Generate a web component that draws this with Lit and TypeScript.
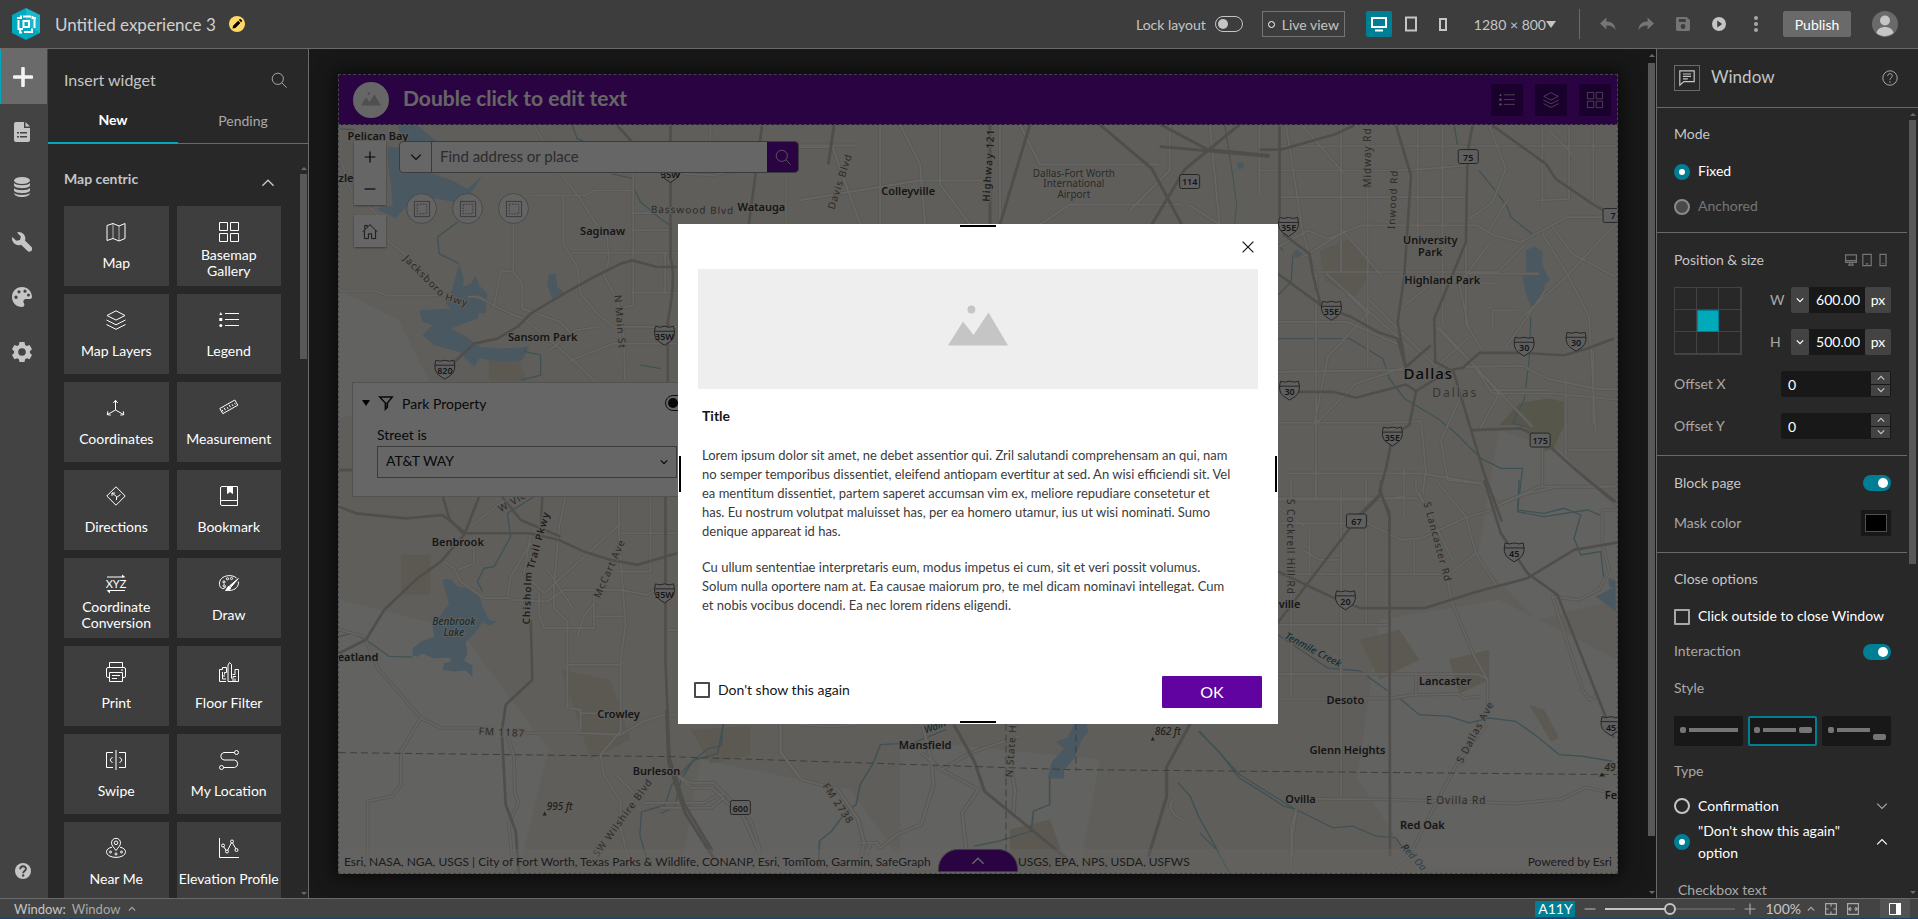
import { LitElement, html, svg, css } from "lit";
import { customElement } from "lit/decorators.js";

/* ---------- icons ---------- */

const glyphs: Record<string, unknown> = {
  map: svg`<path d="M1 3.500 7 1.500l6 2.500 6-2.500v15l-6 2.500-6-2.500-6 2z"/><path d="M7 1.500v15M13 4v15" opacity=".6"/>`,
  grid: svg`<path d="M.5.5h8v8h-8zM11.500.5h8v8h-8zM.5 11.500h8v8h-8zM11.500 11.500h8v8h-8z"/>`,
  layers: svg`<path d="M10 .8 19 5.500l-9 4.600L1 5.500zM.5 10l9.500 4.800L19.500 10M.5 14.500 10 19.300l9.500-4.800"/>`,
  legend: svg`<path d="M6 3.500h14M6 9.500h14M6 15.500h14"/><path fill="currentColor" stroke="none" d="M.3 5 1.800 2l1.500 3zM.3 8h3v3h-3z"/><circle cx="1.800" cy="15.500" r="1.500" fill="currentColor" stroke="none"/>`,
  coords: svg`<path d="M9.500 12V2.500M7.300 5l2.200-2.700L11.700 5M9.500 12l-8 4.500M9.500 12l8 4.500M1.800 13.300l-.5 3.400 3.500.4M17.300 13.300l.5 3.400-3.500.4"/>`,
  ruler: svg`<path d="m.8 11.500 15-8.500 3 5.200-15 8.500zM4 14.500l-.9-1.700M6.500 13.200 5 10.800M9 11.800l-.9-1.700M11.500 10.200 10 7.800M14 9l-.9-1.700M16.300 7.500l-.7-1.300" transform="translate(0 -1)"/>`,
  directions: svg`<path d="M10 .8 19.200 10 10 19.200.8 10z"/><path d="M10.500 14v-3.500L6 7M6 10V7h3.200M10.500 11.500l4-3"/>`,
  bookmark: svg`<path d="M3 .5h15.500v19H3A1.500 1.500 0 0 1 1.500 18V2A1.500 1.500 0 0 1 3 .5zM1.500 15.500A1.500 1.500 0 0 1 3 14.500h15.500"/><path fill="currentColor" d="M8.500.5h5v7L11 5.500l-2.500 2z"/>`,
  xyz: svg`<path d="M1 3h17M2 16.500h17"/><path fill="currentColor" stroke="none" d="M16 .5 19.500 3.300H16zM4 19.500.5 16.200H4z"/><text x="10" y="14" text-anchor="middle" font-size="11" font-family="Lato, sans-serif" fill="currentColor" stroke="none">XYZ</text>`,
  draw: svg`<path d="M17.500 4C13.500.5 6 1 2.500 4.500c-3.300 3.500-2.500 9 1 10 2.500.6 2.300-1.500 3.700-2M19.300 7.500c1 4.500-3 9-9.300 9"/><circle cx="5" cy="8" r="1.100"/><circle cx="8.500" cy="4.800" r="1.100"/><circle cx="12.500" cy="4.500" r="1.100"/><circle cx="5.200" cy="11.800" r="1.100"/><path fill="currentColor" d="M19.300 4.500 11 11.500l1.200 1.400zM10.300 12c-2 .5-2 2.800-3.800 4.500 3 .5 5-.8 5.200-2.800z"/>`,
  print: svg`<path d="M3.500 5.500v-5h13v5M3.500 15.500H2A1.500 1.500 0 0 1 .5 14V7A1.500 1.500 0 0 1 2 5.500h16A1.500 1.500 0 0 1 19.500 7v7a1.500 1.500 0 0 1-1.500 1.500h-1.500M3.500 10.500h13v9h-13zM6 13.500h8M6 16.500h5M15 8h2"/>`,
  floor: svg`<path d="M.5 19.500v-12h3v-2h4v5h-2v2M9 19.500V3l1.500-2.500 2 2v14M.5 19.500H7M9 19.500h10.500v-12H16v5h-2.500M14 19.500v-5h3M3.500 10v7H7M3 14h3M16 16.500v3"/>`,
  swipe: svg`<path d="M10 0v20M7 2.500H.5v15H7M13 2.500h6.500v15H13M6.500 7 4 10l2.500 3M13.500 7l2.500 3-2.500 3"/>`,
  location: svg`<circle cx="17.500" cy="2.500" r="2"/><circle cx="2.500" cy="17.500" r="2"/><path d="M15.500 2.500H5a3.800 3.800 0 0 0 0 7.500h10.500a3.800 3.800 0 0 1 0 7.500h-11"/>`,
  nearme: svg`<path d="M10 12.500C7.500 9 5.500 7.500 5.500 4.800a4.500 4.500 0 0 1 9 0C14.500 7.500 12.500 9 10 12.500z"/><circle cx="10" cy="4.800" r="1.800"/><path d="M6 9.200C-1 10.500-1 16 4 18.200c3.500 1.600 8.500 1.600 12 0 5-2.200 5-7.700-2-9"/><circle cx="4.500" cy="14" r="1"/><circle cx="10" cy="16" r="1"/><circle cx="15.500" cy="14" r="1"/>`,
  elevation: svg`<path d="M.5 0v19.500H20M4.500 8.500 7.500 13M8.500 12.500l4-8M13.500 5l3.500 6"/><circle cx="4" cy="7.500" r="1.500"/><circle cx="8" cy="13.500" r="1.500"/><circle cx="13" cy="3.500" r="1.500"/><circle cx="17.500" cy="12" r="1.500"/>`,
  search: svg`<circle cx="8.500" cy="8.500" r="7"/><path d="m13.500 13.500 6 6"/>`,
  up: svg`<path d="m2 14 8-8 8 8"/>`,
  down: svg`<path d="m2 6 8 8 8-8"/>`,
  plus: svg`<path d="M10 1v18M1 10h18"/>`,
  minus: svg`<path d="M1 10h18"/>`,
  close: svg`<path d="m1 1 18 18M19 1 1 19"/>`,
  home: svg`<path d="M1 11 10 2l9 9M3 9.500v10h5v-6h4v6h5v-10M3.500 8V3h3v2"/>`,
  filter: svg`<path d="M1 1.500h18l-7 8.500v6l-3 3V10z"/><path fill="currentColor" stroke="none" opacity=".5" d="M10 9h2v7l-2 2z"/>`,
  dashed: svg`<path d="M.5.5h19v19H.5z"/><path stroke-dasharray="2 1.500" d="M4 4h12v12H4z"/>`,
  question: svg`<circle cx="10" cy="10" r="9"/><path d="M7 7.500c.2-4 6-3.600 6-.3 0 2.300-3 2.300-3 5M10 14v1.800"/>`,
  chat: svg`<path stroke-width="1.500" d="M1 1h18v13.500H6L1 19zM5 5h10M5 8h10M5 11h6"/>`,
  desktop: svg`<path d="M1 1.500h18v12.500H1zM1 11h18M5 18.500h10M8 14v4M12 14v4"/>`,
  tablet: svg`<path d="M3 .5h14v19H3zM8 16.500h4"/>`,
  phone: svg`<path d="M5 .5h10v19H5zM9 16h2"/>`,
  fit: svg`<path d="M1 1h18v18H1zM10 1v5M10 14v5M1 10h5M14 10h5"/>`,
  fitwide: svg`<path d="M1 1h18v18H1zM3 10h5M12 10h5M6 7l-3 3 3 3M14 7l3 3-3 3"/>`,
};

const icon = (name: string, size = "s20") =>
  html`<svg class="icon ${size}" viewBox="0 0 20 20" aria-hidden="true">${glyphs[name]}</svg>`;

const solids: Record<string, unknown> = {
  add: svg`<path d="M8.200 1.500a1.500 1.500 0 0 1 3.600 0v6.700h6.700a1.500 1.500 0 0 1 0 3.600h-6.700v6.700a1.500 1.500 0 0 1-3.600 0v-6.700H1.500a1.500 1.500 0 0 1 0-3.600h6.700z"/>`,
  page: svg`<path fill-rule="evenodd" d="M4 0h8v6h6v12a2 2 0 0 1-2 2H4a2 2 0 0 1-2-2V2a2 2 0 0 1 2-2zm1 10v1.500h2V10zm3 0v1.500h7V10zm-3 4v1.500h2V14zm3 0v1.500h7V14z"/><path d="m13.500 0 4.500 4.500h-4.500z"/>`,
  data: svg`<ellipse cx="10" cy="3.500" rx="8" ry="3.500"/><path d="M2 6c2 3 14 3 16 0v2.500c-1 3.500-15 3.500-16 0zM2 11c2 3 14 3 16 0v2.500c-1 3.500-15 3.500-16 0zM2 16c2 2.500 14 2.500 16 0-.5 5.300-15.500 5.300-16 0z"/>`,
  wrench: svg`<path d="M7 0a6.500 6.500 0 0 1 6 8.500l6.300 6.300a2.800 2.800 0 0 1-4 4L9 12.800A6.500 6.500 0 0 1 .3 5l4 3.800 3.700-.8.800-3.500L5 .4z"/>`,
  palette: svg`<path fill-rule="evenodd" d="M10 0C4 0 0 4.500 0 10c0 6 4.500 10 10 10 2 0 3-2 2-3.500-1.500-2.500 0-4.500 2.500-4.500H18c1.500 0 2-1 2-2.500C19.500 4 15.500 0 10 0zM7 3.200a1.600 1.600 0 1 1 0 3.200 1.600 1.600 0 0 1 0-3.200zM13 2.600a1.600 1.600 0 1 1 0 3.200 1.600 1.600 0 0 1 0-3.200zM16.500 6.400a1.500 1.500 0 1 1 0 3 1.500 1.500 0 0 1 0-3zM4 8.600a1.700 1.700 0 1 1 0 3.400 1.700 1.700 0 0 1 0-3.400z"/>`,
  gear: svg`<path fill-rule="evenodd" d="M7.500 0h5l.6 2.900 1.700 1 2.800-.9 2.400 4.200-2.100 2v1.800l2.100 2-2.400 4.200-2.800-.9-1.700 1-.6 2.700h-5l-.6-2.700-1.700-1-2.800.9L0 13l2.100-2V9.200L0 7.200 2.400 3l2.800.9 1.700-1zM10 6.200a3.800 3.800 0 1 0 0 7.600 3.800 3.800 0 0 0 0-7.600z"/>`,
  help: svg`<circle cx="10" cy="10" r="10"/><path d="M6.500 7.800c.2-5 7.300-4.600 7.200-.5 0 2.800-3.500 2.700-3.500 5.500" fill="none" stroke="#434343" stroke-width="2.400"/><circle cx="10.200" cy="15.700" r="1.500" fill="#434343"/>`,
  undo: svg`<path d="M8 2v5c7 0 11 4 11.500 11C17 13.500 13.500 12 8 12v5L0 9.500z"/>`,
  redo: svg`<path d="M12 2v5C5 7 1 11 .5 18 3 13.500 6.500 12 12 12v5l8-7.500z"/>`,
  save: svg`<path fill-rule="evenodd" d="M2 0h13l5 4.500V18a2 2 0 0 1-2 2H2a2 2 0 0 1-2-2V2a2 2 0 0 1 2-2zm2 3v4h10V3zm6 7a3.500 3.500 0 1 0 0 7 3.500 3.500 0 0 0 0-7z"/>`,
  play: svg`<path fill-rule="evenodd" d="M10 0a10 10 0 1 1 0 20 10 10 0 0 1 0-20zM7.500 5v10l7-5z"/>`,
  picture: svg`<circle cx="7.800" cy="3.500" r="1.300"/><path d="m0 15.500 5-8 3.500 4.500 5-7.500L20 15.500z"/>`,
};

const solid = (name: string, size = "s20") =>
  html`<svg class="solid ${size}" viewBox="0 0 20 20" aria-hidden="true">${solids[name]}</svg>`;

/* ---------- shared styles ---------- */

const shared = css`
  * { box-sizing: border-box; }
  button, input, select { font: inherit; color: inherit; margin: 0; }
  button { background: none; border: 0; padding: 0; display: inline-flex; align-items: center; justify-content: center; }
  h1, h2, h3, p { margin: 0; font: inherit; }
  .icon { fill: none; stroke: currentColor; stroke-width: 1; overflow: visible; flex: none; }
  .solid { fill: currentColor; flex: none; }
  .s8 { width: 8px; height: 8px; stroke-width: 3; }
  .s12 { width: 12px; height: 12px; stroke-width: 2; }
  .s14 { width: 14px; height: 14px; stroke-width: 2; }
  .s16 { width: 16px; height: 16px; stroke-width: 1; }
  .s20 { width: 20px; height: 20px; }
  .s60 { width: 60px; height: 60px; }
  .gutter { display: flex; flex-direction: column; align-items: center; flex: none; }
  .arrow { border: 3px solid transparent; width: 0; height: 0; }
  .arrow.n { border-bottom-color: #6a6a6a; border-top: 0; }
  .arrow.s { border-top-color: #6a6a6a; border-bottom: 0; margin-top: auto; }
  .thumb { width: 7px; background: #585858; margin-top: 4px; }
  .switch { appearance: none; width: 28px; height: 16px; border-radius: 8px; background: #007f94; padding: 3px; display: flex; justify-content: flex-end; flex: none; }
  .switch::before { content: ""; width: 10px; height: 10px; border-radius: 50%; background: #fff; }
  .switch.off { background: none; border: 1px solid #c5c5c5; padding: 2px; justify-content: flex-start; }
  .switch.off::before { background: #c5c5c5; }
  .check { appearance: none; width: 16px; height: 16px; border: 2px solid #a8a8a8; border-radius: 1px; flex: none; }
  .radio { appearance: none; width: 16px; height: 16px; border: 2px solid #c5c5c5; border-radius: 50%; flex: none; }
  .radio:checked { border: 5px solid #007f94; background: #fff; }
  .radio:disabled { border-color: #8a8a8a; background: #4a4a4a; }
`;

/* ---------- basemap ---------- */

type Label = [text: string, x: number, y: number, kind?: string, angle?: number];

const labels: Label[] = [
  ["Pelican Bay", 377, 139], ["Saginaw", 602, 235], ["Watauga", 761, 211], ["Colleyville", 908, 195],
  ["Sansom Park", 542, 341], ["Benbrook", 457, 546], ["Crowley", 618, 718], ["Burleson", 656, 775],
  ["Mansfield", 925, 749], ["University", 1431, 244], ["Park", 1431, 256], ["Highland Park", 1443, 284],
  ["Lancaster", 1446, 685], ["Desoto", 1346, 704], ["Glenn Heights", 1348, 754], ["Ovilla", 1301, 803],
  ["Red Oak", 1423, 830], ["ville", 1290, 608], ["zle", 345, 182], ["eatland", 357, 661], ["Fe", 1612, 799],
  ["Dallas", 1429, 379, "city"], ["Dallas", 1456, 397, "county"],
  ["Dallas-Fort Worth", 1074, 176, "poi"], ["International", 1074, 187, "poi"], ["Airport", 1074, 198, "poi"],
  ["Benbrook", 453, 625, "water"], ["Lake", 453, 636, "water"], ["Tenmile Creek", 1312, 653, "water", 28],
  ["Waln", 936, 730, "water", -20], ["Red Oa", 1412, 860, "water", 48],
  ["995 ft", 559, 810, "peak"], ["862 ft", 1168, 735, "peak"], ["49", 1611, 771, "peak"],
  ["Basswood Blvd", 692, 213, "road", 1], ["Davis Blvd", 843, 182, "road", -72], ["Highway 121", 992, 165, "roadb", -86],
  ["Jacksboro", 421, 278, "road", 45], ["Hwy", 455, 303, "road", 16], ["N Main St", 616, 322, "road", 85],
  ["Chisholm", 530, 598, "roadb", -88], ["Trail Pkwy", 541, 541, "roadb", -74], ["W Vic", 513, 505, "road", -30],
  ["McCart Ave", 612, 570, "road", -66], ["FM 1187", 501, 736, "road", 3], ["SW Wilshire Blvd", 625, 820, "road", -54],
  ["FM 2738", 835, 806, "road", 56], ["N State Hwy", 1015, 744, "road", -86], ["Midway Rd", 1372, 157, "road", -90],
  ["Inwood Rd", 1397, 199, "road", -87], ["S Cockrell Hill Rd", 1287, 547, "road", 90],
  ["S Lancaster Rd", 1435, 543, "road", 75], ["E Ovilla Rd", 1457, 804, "road"], ["S Dallas Ave", 1479, 734, "road", -62],
];

type Shield = [text: string, x: number, y: number];
const interstates: Shield[] = [
  ["35W", 670, 172], ["35W", 664, 335], ["35W", 664, 593], ["820", 444, 369], ["35E", 1289, 226], ["35E", 1332, 310],
  ["35E", 1393, 436], ["30", 1290, 390], ["30", 1525, 346], ["30", 1577, 341], ["20", 1346, 600], ["45", 1515, 552], ["45", 1612, 726],
];
const routes: Shield[] = [["75", 1469, 156], ["67", 1357, 521], ["175", 1541, 440], ["114", 1190, 181], ["600", 740, 808], ["7", 1614, 215]];

const highways = svg`
  <g transform="translate(330 60) scale(.333333)">
    <path d="M345 930l85-80 70-15 60-35 40-40 100-60 90-50 80-40 35-10 75 20h60M1020 195v400q18 50-8 190v500M860 195l50 55M1295 195l-40 300"/>
  </g>
  <g transform="translate(330 360) scale(.333333)">
    <path d="M25 880l80-40 55-90 100-95 70-50 70-80 45-115M25 440l50 20 150 15 110-10 70 55h190l90 20 75 35 80 25 80 15 120-35M335 405l20 70 45 50M635 405l-5 115M510 405l60 75 120 50M1005 405v500l12 290 45 140 85 140M600 780l5 180-80 75-12 80 12 220 30 80 10 140"/>
  </g>
  <g transform="translate(1260 100) scale(.333333)">
    <path d="M60 75v275M0 147h65l160-45 60-28M410 75l45 150-20 300-20 140 25 140M640 75l-15 80-5 270-95 230 3 130 55 30 90 300 55 150M700 75l160 115 30 45 110 75 60 35M70 400l80 60 10 60 25 100M55 520l130 95 90 35 80 45 60 20 25 90M440 800l75-65M60 875h160l70 18 150-40 30 20 40-25 70-40 30-5 50-45h130l125 7 70-20 80-30M470 875l-20 100-50 30-20 100-20 70 30 60v60M635 990l150-5 60 30 100 90 120 100M360 1185l-60 60"/>
  </g>
  <g transform="translate(1200 480) scale(.333333)">
    <path d="M545 0v40l25 70 2 1020M235 275l180 85 70 25h190l160-50 150-40 140-85 130-22M855 0l50 160 80 120 90 65 170 430M1165 0l85 65M540 50l-70 70-240 315"/>
  </g>
  <g transform="translate(660 710) scale(.408163 .333333)">
    <path d="M15 0l5 160 40 150 70 135M720 45l50 110 25 90 200 200M1300 42l-58 130v90l-45 180"/>
  </g>
  <path d="M834 124l-6 40M990 124v100M1161 124l47 25 62 6M1240 124l-55 45-33 55M1100 124l52 44 30 56M1030 124l-30 100"/>
  <path d="M338 470h16M1160 146l110 10"/>`;

const streets = svg`
  <g transform="translate(330 60) scale(.333333)">
    <path d="M690 340l55 70 45 70 40 50 5 70-15 45 40 75 20 110 3 130M600 405h165l25-15h118M698 405v145l42 70 10 80 50 60 50 40h190M722 577h320M908 340v395l-40 10M910 458h60M910 510l120-2M1004 577v120M910 697h130M25 692h110l35 14h130l60-5M170 540l50 40 110 100M410 710c50-10 60 30 170 65l130 110 80 75M548 490v145l27 35v75l115 40 40 45M490 740l20-110 38 5M720 900l130-50h190M30 300l30 90 110 100M1365 260h140M1140 195v50M610 195l30 50M655 870l80-60 70-10M1060 340l100 5M1368 340v160M1160 340l60-10"/>
  </g>
  <g transform="translate(330 360) scale(.333333)">
    <path d="M25 810l75 20 40 95 130 150 60 30h120M270 1075l-60 100v100l-25 35-75 15v180M570 1120h170l130 5 70-40 60-20h35M710 1045v-260l-40-40v-60l15-180 20-100M710 1045l40 5v60M710 915h160M865 405v120l20 270-15 110v210l-60 70 10 60 50 80v80l30 120 60 60M530 1130l20 60 2 110 12 30-30 60 10 100M340 605l30 20 20 40 70 50h80M430 520v90l-50 20M540 720l110 5 50-35h170l80 15 60-40M530 710l10-60 60-100M625 700v60l15 45h150v-100M600 520l-20 120 60 60 100-90 130-120M960 405v230h-100M650 630l20 30 60 90M790 770h95M940 1330l-90-90M1030 1240l50 30h70l30 30-60 30H940M1180 1300l80 80 30 90M870 520h170M1010 810h40M750 1060l130 2M740 830l20-60 30-40M420 500l100-80M1350 1075v100l60 80"/>
  </g>
  <g transform="translate(1260 100) scale(.333333)">
    <path d="M0 210h410l90-5 120-10M65 137h1005M65 290h555M850 75v240M475 75v330M550 75v600M245 75v440M325 100v700M930 75v220l-100 5M1003 75v230M80 75l50 320 45 170M55 440l90-50 60 25 100-40h350l50 30 80 20 140-75h190M130 470l130-80M165 515h550l80-80M170 520v680M55 665h210l180 80M55 815l380-5M55 968h330l100-5 15 150-10 70M75 1120h410l180 30M55 1195h420M620 430v240l50 80M690 75l50 130-40 100-70 50M750 290l-60 100M850 400l80 130 60 120 10 170 10 180M620 800l170-3 80 40 150 30h50M630 690l-30-140 90-120M520 670l120 120 60 90h180l190 18M640 790l180 190M700 870h170M790 650l130-120 150-160M330 600l200 200 100-90M200 520l260 230M265 580l60 60-120 130-40 200M440 800l-150 50-120 120M480 1180l100 200M710 1220l130-60h230M850 1000v160M920 840v230M1003 750v220M930 1050h140M540 680l180 200-60 110M430 620l100-80 170 10M700 690v-60l80 0M880 380l60 80 130 70M600 900l-55 120 20 120 90 10M620 520h220M740 740l120-170M130 75l120 140M870 90l70 70M250 390l120 140M435 1100v150"/>
  </g>
  <g transform="translate(1200 480) scale(.333333)">
    <path d="M425 30v920M275 0v650M348 0v60M235 60h290l90-10M235 130h270l100 50 60-5 130-60 100-30M235 283h500M235 435h330M235 583h600l30 15v80M235 658h170l90-2h80l60-10 140-3 20 12 50-5M345 958l220 2 250 7 130 5 140-13 75-35 90 20M865 730l-90 120-80 150-60 120-60 50M745 300l10 60 70 170 35 60M710 0l90 110 30 110-90 70M830 220l60 95M650 0v30l30 50M900 75l-60-70M905 70l80-30 90-20h150M1060 350l80 10 60-30 30-60-20-80v-100h40M1060 350l90 280 20 30 20-10M235 80l80 60M290 990l-15 50v130M645 180v100M650 585v60M330 150v135M500 0v430M310 210l50 30h60"/>
  </g>
  <g transform="translate(660 710) scale(.408163 .333333)">
    <path d="M295 40v90l50 80 90 30 50 90 15 70-10 50M485 400h45l10 15 40-40 60-30 30-120-5-70-20-100-30-60M515 400l-10 40M690 180l90 60-40 70 10 110M690 180l70-50 120-50M45 200l30 35h50l30 30-30 30H0M150 265l50 50 30 80 15 40M860 180l10 60-5 80M640 130l50 50M340 45l80 5 60-5M1560 300l-10 80v60M1260 270c-20 20 0 50 20 60"/>
  </g>
  <path d="M798 145h60M830 140l30 84M880 124v100M900 124l20 40 5 60M940 124v60l30 40M798 200l120-20h70M1000 124v100M1020 124l20 40 120 0M1040 224l30-20h110M1130 210l40-40v-46M1190 205l30 19M1210 124l10 100M1260 124v70"/>`;

const creeks = svg`
  <g transform="translate(330 60) scale(.333333)">
    <path d="M380 485l-60 45 5 50 60 30M910 385l20 40 60 50 30 20M725 195l15 40 25 10M570 960l60-15v-60l-50-12M930 915l60 10M25 205l45 2M845 340l65 15"/>
  </g>
  <g transform="translate(330 360) scale(.333333)">
    <path d="M25 830l40-10 40 20 70 50 70 2M440 665l20-40 30-5 50-90-10-70 80-50M440 665l15 30M1178 1077l-5 80-40 10-60 50-50 60-20 60-70 20-5 70 20 70"/>
  </g>
  <g transform="translate(1260 100) scale(.333333)">
    <path d="M585 75l10 60M660 210l40 50 45 60 10 30 75 60M55 715h215l100 60 20 60 45 60 100 60 50 40 80 80 60 30h65l-15 130 80 15 130-20 50 20M815 650l-5 130-15 120-35 70 40 10M55 585l40-40 5-80M0 370l70 80"/>
  </g>
  <g transform="translate(1200 480) scale(.333333)">
    <path d="M235 465l150 100 95 8 85 60M600 655l60 50 90 5 60 20 60-15 80 10 70 50 60 50 70 5 90 15M0 755l120 130 160 100 120 60 60-5 70 30 60 5 40 60M0 1060l50 50 40 70M960 0l-5 90 80 10 60-15 50 20-20 70 20 50 60-10 10 90-15 30"/>
  </g>
  <g transform="translate(660 710) scale(.408163 .333333)">
    <path d="M155 42l-15 90-60 20-30 60-15 80-35 20M700 60l-80 40-80 5-20 60-30 60-10 60-30 30-30 50-30 30-2 80M955 205v80l-40 20-5 60-80 30-60 15M1320 65l50 60 50 80 60 45 50 40 30 10M1270 220l30 40 20 60 50 110"/>
  </g>
  <path d="M1225 124l8 50 4 30-2 20"/>`;

const water = svg`
  <g transform="translate(330 60) scale(.333333)">
    <path d="M200 195h60l55 45v20l-10 80 60 20 45 25 45-40-35 55-20 5-5 25-100-20-30-10-50 50-20 25-60-30 50-10-5-60-10-70v-45h50z"/>
    <path d="M385 610l15 50-5 20 25-10 15-25 10 30 25 25-5 60-70-5-35-10-15-15 20-45zM655 640h20l5 40 20 15-35 20-15-40zM265 750l80-5 50 5 40-30 20-5-15 60-80 30 40 20 50 35 60 5 85-5-20 40-60 5-70-10-15 25-20-20-25-25-75-20-35-30 30-30-30-10z"/>
  </g>
  <g transform="translate(330 360) scale(.333333)">
    <path d="M335 658h25l20 22 60 10 15 50 20 40 25 5-25 12-20-10-20 30-30 30 5 35-10 20 25 15v35l-20-20-35 3-35-5 5-20 20-5 0-12-50 3-35-15-15 10-15-5v-20l25-20 40-15-5-30 50-70-10-30z"/>
  </g>
  <g transform="translate(1260 100) scale(.333333)">
    <path d="M800 450l25-12 25 15v40l15 35 8 10-15 12-5 30-20 30-15 15-18-45-10-50 12-10zM100 455l15-8 14 15-14 10-13-2z"/>
  </g>
  <g transform="translate(1200 480) scale(.333333)">
    <path d="M1228 293l22 10v22l-20-5zM1190 350l60-30v75z"/>
  </g>
  <g transform="translate(660 710) scale(.408163 .333333)">
    <path d="M1015 42h30l5 25-15 20-20 60-25 35v25h-40l10-50 30-40-20-20 30-15z"/>
  </g>
  <path d="M1238 162h6v6h-6z"/>`;

@customElement("city-basemap")
export class CityBasemap extends LitElement {
  static styles = css`
    :host { display: block; overflow: hidden; background: #f0ece0; }
    svg { display: block; width: 100%; height: 100%; }
    .park { fill: #e3dece; }
    .pale { fill: #f5f4ef; }
    .forest { fill: #d8dab8; }
    .water { fill: #b8dcf2; }
    .creeks { fill: none; stroke: #9ecbd4; }
    .creeks g { stroke-width: 4; }
    .edge, .fillroad, .hw { fill: none; stroke-linejoin: round; }
    .edge { stroke: #e0dbd1; stroke-width: 4; }
    .edge g { stroke-width: 11; }
    .fillroad { stroke: #fdfcf8; stroke-width: 2; }
    .fillroad g { stroke-width: 5; }
    .hw { stroke: #c6c2bb; stroke-width: 3; }
    .hw g { stroke-width: 8; }
    .county-line { fill: none; stroke: #9a9a90; stroke-dasharray: 7 4; }
    text { font: 600 11px "Noto Sans", sans-serif; fill: #38383c; text-anchor: middle; paint-order: stroke; stroke: #f0ece0; stroke-width: 2px; }
    .city { font-size: 15px; font-weight: 500; fill: #202022; letter-spacing: 1px; }
    .county { font-size: 12px; font-weight: 400; fill: #8b887c; letter-spacing: 2px; }
    .poi, .road, .roadb { font-size: 10px; font-weight: 400; fill: #6b6b6b; letter-spacing: 1px; }
    .poi { letter-spacing: 0; }
    .roadb { font-weight: 600; fill: #505050; }
    .water-label, .peak { font-size: 10px; font-weight: 500; font-style: italic; fill: #33718d; }
    .peak { fill: #58533e; }
    .shield { fill: #eee; stroke: #5c5c5c; stroke-width: 1; }
    .num { font-size: 9px; stroke: none; }
  `;

  render() {
    return html`<svg viewBox="338 124 1280 750" preserveAspectRatio="xMidYMid slice" role="img" aria-label="Map of Dallas and Fort Worth">
      <path class="pale" d="M338 290l60 30 30 60-90 40zM338 600l120 30 90 120-30 120H338zM1380 620l120-20 118 60v210h-200l-60-90zM1500 430l60 20 58 60v90l-80 20-60-60zM700 760l150 30 60 84H680zM900 740l200 20-20 110H900z"/>
      <path class="park" d="M488 355l28-4 10 30h-38zM1320 250l30-12 25 30-20 30-30-18zM400 555h30v40h-30zM560 670l50 10 20 60-40 20zM690 730l60-4v30l-40 8zM1010 830l40-10 20 54h-60zM1530 705l15 5 15 28-8 4zM1450 660l40-10v30l-30 14zM1360 640l40-10 20 30-40 20z"/>
      <path class="forest" d="M1500 425l20-22 30-5 16 4v22l-12 25-10 2-20-26z"/>
      <g class="water">${water}</g>
      <g class="creeks">${creeks}</g>
      <g class="edge">${streets}</g>
      <g class="fillroad">${streets}</g>
      <g class="hw">${highways}</g>
      <path class="county-line" d="M338 753l330 4 400 13 550 5M1006 724v150M1076 724v46"/>
      ${interstates.map(([t, x, y]) => svg`<g transform="translate(${x} ${y})"><path class="shield" d="M-9-9q4 2 9 0 5 2 9 0 3 10-3 15-3 2-6 4-3-2-6-4-6-5-3-15z"/><path class="shield" d="M-10-4h20"/><text class="num" y="5">${t}</text></g>`)}
      ${routes.map(([t, x, y]) => svg`<g transform="translate(${x} ${y})"><rect class="shield" x="-10" y="-7" width="20" height="14" rx="2"/><text class="num" y="4">${t}</text></g>`)}
      ${labels.map(([t, x, y, kind = "town", angle = 0]) => svg`<text class=${kind === "water" ? "water-label" : kind} transform="translate(${x} ${y}) rotate(${angle})">${t}</text>`)}
      <path fill="#58533e" d="M542 816l2-4 2 4zM1151 741l2-4 2 4zM1600 777l3-4 3 4z"/>
    </svg>`;
  }
}

/* ---------- insert panel ---------- */

const widgets: [string, string][] = [
  ["map", "Map"], ["grid", "Basemap\nGallery"], ["layers", "Map Layers"], ["legend", "Legend"],
  ["coords", "Coordinates"], ["ruler", "Measurement"], ["directions", "Directions"], ["bookmark", "Bookmark"],
  ["xyz", "Coordinate\nConversion"], ["draw", "Draw"], ["print", "Print"], ["floor", "Floor Filter"],
  ["swipe", "Swipe"], ["location", "My Location"], ["nearme", "Near Me"], ["elevation", "Elevation Profile"],
];

@customElement("insert-panel")
export class InsertPanel extends LitElement {
  static styles = [shared, css`
    :host { display: flex; flex-direction: column; min-height: 0; background: #282828; border-right: 1px solid #6a6a6a; color: #c5c5c5; }
    .title { display: flex; align-items: center; justify-content: space-between; height: 62px; padding: 0 21px 0 16px; font-size: 16px; }
    .title h2 { padding-bottom: 2px; }
    .tabs { display: flex; height: 33px; border-bottom: 1px solid #6a6a6a; }
    .tab { flex: 1; font-size: 14px; color: #a8a8a8; padding-bottom: 14px; margin-bottom: -1px; }
    .tab.on { color: #fff; font-weight: 700; border-bottom: 2px solid #00aabb; }
    .scroll { flex: 1; display: flex; min-height: 0; overflow: hidden; }
    .list { flex: 1; padding: 0 19px 0 16px; min-width: 0; }
    .group { display: flex; width: 100%; justify-content: space-between; height: 62px; padding: 16px 6px 0 0; font-size: 14px; font-weight: 700; }
    .group span { padding-bottom: 10px; }
    .cards { display: grid; grid-template-columns: 1fr 1fr; gap: 8px; }
    .card { background: #3e3e3e; height: 80px; flex-direction: column; justify-content: flex-start; padding-top: 16px; gap: 3px; color: #fff; font-size: 14px; line-height: 16px; }
    .card span { height: 36px; display: flex; align-items: center; text-align: center; white-space: pre-line; }
    .gutter { width: 8px; padding: 23px 1px 3px 0; }
    .thumb { height: 185px; }
  `];

  render() {
    return html`
      <div class="title"><h2>Insert widget</h2><button aria-label="Search">${icon("search", "s16")}</button></div>
      <div class="tabs" role="tablist">
        <button class="tab on" role="tab" aria-selected="true">New</button>
        <button class="tab" role="tab" aria-selected="false">Pending</button>
      </div>
      <div class="scroll">
        <div class="list">
          <button class="group"><span>Map centric</span>${icon("up", "s14")}</button>
          <div class="cards">
            ${widgets.map(([i, name]) => html`<button class="card">${icon(i)}<span>${name}</span></button>`)}
          </div>
        </div>
        <div class="gutter"><i class="arrow n"></i><i class="thumb"></i><i class="arrow s"></i></div>
      </div>`;
  }
}

/* ---------- settings panel ---------- */

@customElement("settings-panel")
export class SettingsPanel extends LitElement {
  static styles = [shared, css`
    :host { display: flex; flex-direction: column; min-height: 0; background: #282828; border-left: 1px solid #6a6a6a; color: #c5c5c5; font-size: 14px; line-height: 20px; }
    .head { display: flex; align-items: center; gap: 11px; height: 59px; padding: 0 20px 0 17px; border-bottom: 1px solid #6a6a6a; font-size: 17px; }
    .head h2 { flex: 1; padding-bottom: 2px; }
    .badge { width: 26px; height: 26px; border: 1px solid #6a6a6a; display: grid; place-items: center; }
    .badge .icon { width: 16px; height: 16px; }
    .scroll { flex: 1; display: flex; min-height: 0; overflow: hidden; }
    .body { flex: 1; min-width: 0; }
    section { padding: 16px 16px 0 17px; border-bottom: 1px solid #6a6a6a; }
    section:last-child { border: 0; }
    .row { display: flex; align-items: center; justify-content: space-between; gap: 8px; height: 26px; margin-bottom: 16px; }
    .row.opt { justify-content: flex-start; height: 20px; margin-bottom: 15px; color: #fff; }
    .row.opt label { padding-bottom: 2px; }
    .row .end { margin-left: auto; }
    .heading { height: 22px; margin-bottom: 16px; color: #c5c5c5; }
    .heading.dim { height: 23px; padding-top: 1px; color: #a8a8a8; }
    .heading.type-head { margin-bottom: 12px; }
    .dim { color: #a8a8a8; }
    .row label.faint { color: #757575; }
    .mini { display: flex; gap: 4px; color: #757575; margin-right: 2px; }
    .mini .icon { width: 12px; height: 12px; }
    .size { display: flex; justify-content: space-between; }
    .nine { display: grid; grid-template-columns: repeat(3, 1fr); width: 68px; height: 68px; border: 1px solid #434343; }
    .nine button { border: 1px solid #434343; border-width: 0 1px 1px 0; }
    .nine .on { background: #00aabb; border: 1px solid #007f94; }
    .fields label { display: block; width: 21px; color: #a8a8a8; }
    .fields .row { gap: 0; }
    .fields .drop, .unit { background: #434343; height: 26px; color: #fff; border-radius: 2px; }
    .fields .drop { width: 18px; }
    .unit { width: 26px; }
    .num { background: #181818; border: 0; height: 26px; color: #fff; outline: 0; }
    .fields .num { width: 56px; padding: 0 5px 2px; text-align: right; }
    .spin { display: flex; width: 110px; background: #181818; border-radius: 2px; padding: 1px; height: 26px; }
    .spin .num { flex: 1; min-width: 0; padding: 0 6px; height: 24px; }
    .steps { display: grid; width: 19px; gap: 1px; }
    .steps button { background: #434343; }
    .swatch { width: 30px; height: 26px; background: #181818; padding: 4px; }
    .swatch i { width: 22px; height: 18px; background: #000; border: 1px solid #4f4f4f; }
    .styles { display: grid; grid-template-columns: repeat(3, 1fr); gap: 5px; margin-bottom: 14px; }
    .style { height: 30px; background: #181818; border-radius: 2px; }
    .style.on { border: 2px solid #007f94; }
    .style svg { width: 58px; height: 20px; fill: #757575; }
    .type { display: flex; align-items: center; gap: 8px; color: #fff; line-height: 22px; margin-bottom: 3px; }
    .type label { flex: 1; padding-right: 24px; }
    .type .icon { margin-right: 3px; }
    .type .icon.closed { color: #a8a8a8; }
    .cut { margin: 16px 0 0 4px; }
    .gutter { width: 11px; padding: 5px 2px 4px; }
    .thumb { height: 444px; }
  `];

  private spinner(id: string, text: string) {
    return html`<div class="row"><label class="dim" for=${id}>${text}</label>
      <div class="spin"><input class="num" id=${id} value="0" />
        <span class="steps"><button aria-label="Increase">${icon("up", "s8")}</button><button aria-label="Decrease">${icon("down", "s8")}</button></span>
      </div></div>`;
  }

  private dimension(id: string, value: string) {
    return html`<div class="row"><label for=${id}>${id}</label><button class="drop" aria-label="Sizing mode">${icon("down", "s8")}</button>
      <input class="num" id=${id} value=${value} /><button class="unit">px</button></div>`;
  }

  render() {
    return html`
      <div class="head"><span class="badge">${icon("chat")}</span><h2>Window</h2><button aria-label="Help">${icon("question", "s16")}</button></div>
      <div class="scroll">
        <div class="body">
          <section>
            <h3 class="heading">Mode</h3>
            <div class="row opt"><input class="radio" type="radio" name="mode" id="fixed" checked /><label for="fixed">Fixed</label></div>
            <div class="row opt"><input class="radio" type="radio" name="mode" id="anchored" disabled /><label class="faint" for="anchored">Anchored</label></div>
          </section>
          <section>
            <div class="row heading"><h3>Position &amp; size</h3><span class="mini">${icon("desktop", "s12")}${icon("tablet", "s12")}${icon("phone", "s12")}</span></div>
            <div class="size">
              <div class="nine">${[0, 1, 2, 3, 4, 5, 6, 7, 8].map((n) => html`<button class=${n === 4 ? "on" : ""} aria-label="Anchor position ${n + 1}"></button>`)}</div>
              <div class="fields">${this.dimension("W", "600.00")}${this.dimension("H", "500.00")}</div>
            </div>
            ${this.spinner("offx", "Offset X")}${this.spinner("offy", "Offset Y")}
          </section>
          <section>
            <div class="row heading"><label for="block">Block page</label><input class="switch" type="checkbox" role="switch" id="block" checked /></div>
            <div class="row"><span class="dim">Mask color</span><button class="swatch" aria-label="Mask color"><i></i></button></div>
          </section>
          <section>
            <h3 class="heading">Close options</h3>
            <div class="row opt"><input class="check" type="checkbox" id="outside" /><label for="outside">Click outside to close Window</label></div>
            <div class="row opt"><label class="dim" for="inter">Interaction</label><input class="switch end" type="checkbox" role="switch" id="inter" checked /></div>
            <h3 class="heading dim">Style</h3>
            <div class="styles">
              <button class="style" aria-label="Plain"><svg viewBox="0 0 58 20"><rect y="6" width="6" height="6" rx="2"/><path d="M9 7h49v4H9z"/></svg></button>
              <button class="style on" aria-label="Inline button"><svg viewBox="0 0 58 20"><rect y="6" width="6" height="6" rx="2"/><path d="M9 7h33v4H9z"/><rect x="45" y="6" width="13" height="6" rx="2"/></svg></button>
              <button class="style" aria-label="Button below"><svg viewBox="0 0 58 20"><rect y="6" width="6" height="6" rx="2"/><path d="M9 7h33v4H9z"/><rect x="45" y="13" width="13" height="6" rx="2"/></svg></button>
            </div>
            <h3 class="heading dim type-head">Type</h3>
            <div class="type"><input class="radio" type="radio" name="type" id="conf" /><label for="conf">Confirmation</label>${icon("down", "s12 closed")}</div>
            <div class="type"><input class="radio" type="radio" name="type" id="dont" checked /><label for="dont">"Don't show this again" option</label>${icon("up", "s12")}</div>
            <p class="dim cut">Checkbox text</p>
          </section>
        </div>
        <div class="gutter"><i class="arrow n"></i><i class="thumb"></i><i class="arrow s"></i></div>
      </div>`;
  }
}

/* ---------- page being designed ---------- */

@customElement("design-page")
export class DesignPage extends LitElement {
  static styles = [shared, css`
    :host { display: flex; flex-direction: column; position: relative; width: 1280px; height: 800px; background: #fff; box-shadow: 0 0 16px 4px #0008; }
    .banner { display: flex; align-items: center; gap: 12px; height: 51px; padding: 0 6px 0 14px; background: #6a08a8; border: 1px dashed #aaa; color: #fff; flex: none; }
    .banner h1 { flex: 1; font-size: 21px; font-weight: 700; padding-bottom: 4px; margin-left: 2px; }
    .logo { width: 36px; height: 36px; border-radius: 50%; background: #fff; color: #c5c5c5; display: grid; place-items: center; }
    .tool { width: 32px; height: 32px; background: #43006e; border-radius: 2px; color: #d0c8d8; }
    .tool .icon { width: 16px; height: 16px; }
    .map { flex: 1; position: relative; min-height: 0; border: 1px dashed #aaa; border-top: 0; }
    city-basemap { height: 100%; }
    .over { position: absolute; inset: 16px 15px auto 15px; display: flex; gap: 13px; color: #111; }
    .nav { display: grid; gap: 10px; }
    .nav div { display: grid; background: #fff; box-shadow: 0 1px 2px #0006; }
    .nav button { width: 32px; height: 32px; }
    .search { display: flex; width: 400px; height: 32px; background: #fff; border: 1px solid #959595; border-radius: 4px; overflow: hidden; }
    .search button { width: 31px; flex: none; }
    .search input { flex: 1; min-width: 0; border: 0; border-left: 1px solid #959595; padding: 0 8px 2px; font-size: 15px; background: none; }
    .search input::placeholder { color: #6e6e6e; opacity: 1; }
    .search .go { background: #6a08a8; color: #fff; }
    .rounds { display: flex; gap: 15px; padding: 20px 7px; }
    .rounds button { width: 31px; height: 31px; border-radius: 50%; border: 1px solid #b5b5b5; background: #fffc; color: #777; }
    .filter { position: absolute; left: 13px; top: 257px; width: 352px; height: 115px; background: #fff; border: 1px solid #ccc; padding: 7px 10px 0 9px; font-size: 14px; color: #151515; }
    .filter .top { display: flex; align-items: center; gap: 9px; height: 26px; }
    .filter .top span { flex: 1; }
    .tri { border: 4px solid transparent; border-top: 6px solid #000; border-bottom: 0; }
    .filter .switch.off { border-color: #222; }
    .filter .switch.off::before { background: #151515; }
    .filter label { display: block; margin: 10px 0 3px 15px; line-height: 17px; }
    .pick { position: relative; display: flex; align-items: center; width: 300px; height: 32px; margin-left: 15px; border: 1px solid #959595; }
    .pick select { appearance: none; flex: 1; border: 0; background: none; padding: 0 8px 3px; height: 100%; }
    .pick .icon { margin-right: 8px; }
    .credits { position: absolute; inset: auto 0 0 0; height: 24px; display: flex; align-items: center; padding: 0 5px; background: #fff6; font-size: 12px; color: #4a4a4a; white-space: nowrap; }
    .credits .left { flex: 0 0 592px; }
    .credits .mid { flex: 1; padding-left: 82px; }
    .pull { position: absolute; left: 50%; bottom: 1px; width: 80px; height: 23px; margin-left: -40px; border-radius: 20px 20px 0 0; background: #6a08a8; border: 1px solid #999; color: #fff; }
    .mask { position: absolute; inset: 0; background: #0009; }
    dialog { position: absolute; inset: 0; margin: auto; width: 600px; height: 500px; border: 0; padding: 0 20px; background: #fff; color: #151515; display: flex; flex-direction: column; font-size: 14px; }
    .bar { position: absolute; background: #000; }
    .bar.n, .bar.s { left: 0; right: 0; margin: auto; width: 36px; height: 2px; }
    .bar.n { top: 1px; }
    .bar.s { bottom: 1px; }
    .bar.w, .bar.e { top: 0; bottom: 0; margin: auto; width: 2px; height: 36px; }
    .bar.w { left: 1px; }
    .bar.e { right: 1px; }
    .x { align-self: flex-end; height: 45px; margin-right: 4px; flex: none; }
    .x .icon { width: 12px; height: 12px; stroke-width: 2; }
    .image { height: 120px; background: #eee; color: #c5c5c5; display: grid; place-items: center; flex: none; }
    .text { padding: 0 25px 0 4px; font-size: 13px; line-height: 19px; color: #3b3b3b; flex: 1; }
    .text h2 { font-size: 14px; font-weight: 700; color: #151515; margin: 17px 0 21px; }
    .text p { margin-bottom: 17px; }
    .foot { display: flex; align-items: center; justify-content: space-between; height: 64px; margin: 0 -4px; }
    .foot label { display: flex; align-items: center; gap: 8px; padding-bottom: 5px; }
    .foot .check { border-color: #4a4a4a; }
    .ok { width: 100px; height: 32px; background: #6003a0; color: #fff; font-size: 16px; border-radius: 1px; padding-bottom: 2px; }
  `];

  render() {
    return html`
      <header class="banner">
        <span class="logo">${solid("picture")}</span>
        <h1>Double click to edit text</h1>
        <button class="tool" aria-label="Legend">${icon("legend")}</button>
        <button class="tool" aria-label="Map Layers">${icon("layers")}</button>
        <button class="tool" aria-label="Basemap Gallery">${icon("grid")}</button>
      </header>
      <div class="map">
        <city-basemap></city-basemap>
        <div class="over">
          <div class="nav">
            <div><button aria-label="Zoom in">${icon("plus", "s12")}</button><button aria-label="Zoom out">${icon("minus", "s12")}</button></div>
            <div><button aria-label="Home">${icon("home", "s16")}</button></div>
          </div>
          <div>
            <div class="search"><button aria-label="Sources">${icon("down", "s12")}</button><input aria-label="Find address or place" placeholder="Find address or place" /><button class="go" aria-label="Search">${icon("search", "s16")}</button></div>
            <div class="rounds">${[1, 2, 3].map((n) => html`<button aria-label="Placeholder ${n}">${icon("dashed", "s16")}</button>`)}</div>
          </div>
        </div>
        <div class="filter">
          <div class="top"><i class="tri"></i>${icon("filter", "s14")}<span>Park Property</span><input class="switch off" type="checkbox" role="switch" aria-label="Park Property filter" /></div>
          <label for="street">Street is</label>
          <div class="pick"><select id="street"><option>AT&amp;T WAY</option></select>${icon("down", "s8")}</div>
        </div>
        <div class="credits">
          <span class="left">Esri, NASA, NGA, USGS | City of Fort Worth, Texas Parks &amp; Wildlife, CONANP, Esri, TomTom, Garmin, SafeGraph</span>
          <span class="mid">USGS, EPA, NPS, USDA, USFWS</span><span>Powered by Esri</span>
        </div>
        <button class="pull" aria-label="Open panel">${icon("up", "s14")}</button>
      </div>
      <div class="mask"></div>
      <dialog open aria-label="Window">
        <i class="bar n"></i><i class="bar s"></i><i class="bar w"></i><i class="bar e"></i>
        <button class="x" aria-label="Close">${icon("close")}</button>
        <div class="image">${solid("picture", "s60")}</div>
        <div class="text">
          <h2>Title</h2>
          <p>Lorem ipsum dolor sit amet, ne debet assentior qui. Zril salutandi comprehensam an qui, nam no semper temporibus dissentiet, eleifend antiopam evertitur at sed. An wisi efficiendi sit. Vel ea mentitum dissentiet, partem saperet accumsan vim ex, meliore repudiare consetetur et has. Eu nostrum volutpat maluisset has, per ea homero utamur, ius ut wisi nominati. Sumo denique appareat id has.</p>
          <p>Cu ullum sententiae interpretaris eum, modus impetus ei cum, sit et veri possit volumus. Solum nulla oportere nam at. Ea causae maiorum pro, te mel dicam nominavi intellegat. Cum et nobis vocibus docendi. Ea nec lorem ridens eligendi.</p>
        </div>
        <div class="foot"><label><input class="check" type="checkbox" />Don't show this again</label><button class="ok">OK</button></div>
      </dialog>`;
  }
}

/* ---------- application shell ---------- */

@customElement("app-root")
export class AppRoot extends LitElement {
  static styles = [shared, css`
    :host { display: grid; height: 100vh; grid-template-rows: 49px minmax(0, 1fr) 21px; font-family: Lato, "Open Sans", sans-serif; font-size: 14px; background: #181818; color: #c5c5c5; overflow: hidden; }
    .top { display: flex; align-items: center; padding: 0 20px 0 11px; background: #3d3d3d; border-bottom: 1px solid #6a6a6a; }
    .brand { width: 30px; height: 32px; margin-right: 14px; }
    .top h1 { font-size: 17px; margin-right: 13px; color: #d0d0d0; }
    .edit { width: 16px; height: 16px; }
    .tools { margin-left: auto; display: flex; align-items: center; }
    .lock { display: flex; align-items: center; gap: 9px; margin-right: 19px; }
    .live { height: 26px; width: 83px; border: 1px solid #757575; gap: 7px; margin-right: 21px; }
    .live i { width: 7px; height: 7px; border: 1px solid #fff; border-radius: 50%; }
    .dev { width: 26px; height: 26px; margin-right: 6px; }
    .dev.on { background: #007f94; color: #fff; border-radius: 2px; }
    .dev svg { width: 16px; height: 16px; fill: none; stroke: currentColor; stroke-width: 2; }
    .dims { margin: 0 23px 0 12px; }
    .dims i { border: 5px solid transparent; border-top: 7px solid #c5c5c5; border-bottom: 0; }
    .rule { width: 1px; height: 30px; background: #6a6a6a; margin-right: 20px; }
    .act { display: flex; gap: 22px; align-items: center; color: #757575; }
    .act .bright { color: #c5c5c5; }
    .act .dots { width: 16px; height: 16px; fill: #a8a8a8; }
    .publish { background: #6a6a6a; color: #fff; width: 68px; height: 26px; border-radius: 2px; margin: 0 21px 0 19px; }
    .avatar { width: 26px; height: 26px; }
    .main { display: grid; grid-template-columns: 48px 261px minmax(0, 1fr) 262px; min-height: 0; }
    .rail { display: flex; flex-direction: column; background: #434343; color: #c5c5c5; }
    .rail button { height: 55px; width: 47px; padding-right: 3px; }
    .rail .on { background: #6a6a6a; color: #f3f3f3; border-left: 1px solid #00aabb; }
    .rail .last { margin-top: auto; padding-right: 1px; }
    .canvas { display: flex; min-width: 0; overflow: hidden; background: #181818; }
    .stage { flex: 1; min-width: 0; padding-top: 25px; display: flex; justify-content: center; align-items: flex-start; }
    design-page { flex: none; }
    .canvas .gutter { width: 9px; padding: 5px 1px 4px; }
    .canvas .thumb { height: 92%; margin-top: 6px; }
    .status { display: flex; align-items: center; background: #434343; border-top: 1px solid #6a6a6a; border-bottom: 1px solid #1c3f73; padding: 0 8px 0 14px; }
    .crumb { margin-left: 6px; gap: 8px; color: #a8a8a8; }
    .status .crumb, .status > span { font-size: 13px; }
    .right { margin-left: auto; display: flex; align-items: center; height: 100%; }
    .a11y { background: #007f94; color: #fff; width: 40px; height: 16px; border-radius: 1px; margin-right: 9px; }
    .zoom { appearance: none; width: 130px; height: 12px; margin: 0 9px; background: linear-gradient(#c5c5c5, #c5c5c5) 0 50% / 50% 2px no-repeat, linear-gradient(#5f5f5f, #5f5f5f) 100% 50% / 50% 2px no-repeat; }
    .zoom::-webkit-slider-thumb { appearance: none; width: 12px; height: 12px; border: 2px solid #c5c5c5; border-radius: 50%; background: #434343; }
    .pct { margin: 0 0 0 9px; gap: 6px; }
    .right .s12, .right .s8 { color: #a8a8a8; }
    .right .fitbtn { margin-left: 10px; }
    .dock { width: 30px; height: 100%; background: #525252; margin-left: 21px; }
    .dock svg { width: 12px; height: 12px; }
  `];

  render() {
    return html`
      <header class="top">
        <svg class="brand" viewBox="0 0 30 32" aria-hidden="true"><path fill="#00a9c0" d="M15 0l14 7v18l-14 7-14-7V7z"/><path fill="#35c5d8" d="M15 0l14 7v18L15 16z" opacity=".5"/><path fill="none" stroke="#fff" stroke-width="2" d="M10 7.500V10H6M7.500 12v9H12M9 21v3.500h2M13 24h8v-3.500M23.500 20v-9M25 10h-3.500V8M20 8.500h-8"/><path fill="none" stroke="#fff" stroke-width="2" d="M12.500 13h5.500v6h-5.500z"/></svg>
        <h1>Untitled experience 3</h1>
        <svg class="edit" viewBox="0 0 16 16" aria-hidden="true"><circle cx="8" cy="8" r="8" fill="#ffd968"/><path d="M3.500 12.500l.6-2.800 5-5 2.300 2.300-5 5zM9.800 4l1-1c.7-.6 2.900 1.500 2.300 2.300l-1 1z"/></svg>
        <div class="tools">
          <label class="lock">Lock layout<input class="switch off" type="checkbox" role="switch" /></label>
          <button class="live"><i></i>Live view</button>
          <button class="dev on" aria-label="Desktop"><svg viewBox="0 0 16 16"><path d="M1 2h14v9H1zM4 14.500h8"/></svg></button>
          <button class="dev" aria-label="Tablet"><svg viewBox="0 0 16 16"><path d="M3 1.500h10v13H3z"/></svg></button>
          <button class="dev" aria-label="Phone"><svg viewBox="0 0 16 16"><path d="M5 3h6v11H5z"/></svg></button>
          <button class="dims">1280 × 800<i></i></button>
          <span class="rule"></span>
          <div class="act">
            <button aria-label="Undo">${solid("undo", "s16")}</button><button aria-label="Redo">${solid("redo", "s16")}</button>
            <button aria-label="Save">${solid("save", "s14")}</button><button class="bright" aria-label="Preview">${solid("play", "s14")}</button>
            <button aria-label="More"><svg class="dots" viewBox="0 0 16 16"><circle cx="8" cy="2" r="2"/><circle cx="8" cy="8" r="2"/><circle cx="8" cy="14" r="2"/></svg></button>
          </div>
          <button class="publish">Publish</button>
          <svg class="avatar" viewBox="0 0 26 26" aria-hidden="true"><circle cx="13" cy="13" r="13" fill="#6a6a6a"/><circle cx="13" cy="9.500" r="5" fill="#c5c5c5"/><path fill="#c5c5c5" d="M4.500 22c1-8 16-8 17 0a13 13 0 0 1-17 0z"/></svg>
        </div>
      </header>
      <main class="main">
        <nav class="rail">
          <button class="on" aria-label="Insert">${solid("add")}</button>
          <button aria-label="Page">${solid("page")}</button>
          <button aria-label="Data">${solid("data")}</button>
          <button aria-label="Utilities">${solid("wrench")}</button>
          <button aria-label="Theme">${solid("palette")}</button>
          <button aria-label="Settings">${solid("gear")}</button>
          <button class="last" aria-label="Help">${solid("help", "s16")}</button>
        </nav>
        <insert-panel></insert-panel>
        <div class="canvas">
          <div class="stage"><design-page></design-page></div>
          <div class="gutter"><i class="arrow n"></i><i class="thumb"></i><i class="arrow s"></i></div>
        </div>
        <settings-panel></settings-panel>
      </main>
      <footer class="status">
        <span>Window:</span><button class="crumb">Window ${icon("up", "s8")}</button>
        <div class="right">
          <button class="a11y">A11Y</button>
          <button aria-label="Zoom out">${icon("minus", "s12")}</button>
          <input class="zoom" type="range" value="50" aria-label="Zoom" />
          <button aria-label="Zoom in">${icon("plus", "s12")}</button>
          <button class="pct">100% ${icon("up", "s8")}</button>
          <button class="fitbtn" aria-label="Fit page">${icon("fit", "s12")}</button>
          <button class="fitbtn" aria-label="Fit width">${icon("fitwide", "s12")}</button>
          <button class="dock" aria-label="Toggle panel"><svg viewBox="0 0 12 12"><path fill="none" stroke="#fff" d="M.5.5h11v11H.5z"/><path fill="#fff" d="M7 0h5v12H7z"/></svg></button>
        </div>
      </footer>`;
  }
}
